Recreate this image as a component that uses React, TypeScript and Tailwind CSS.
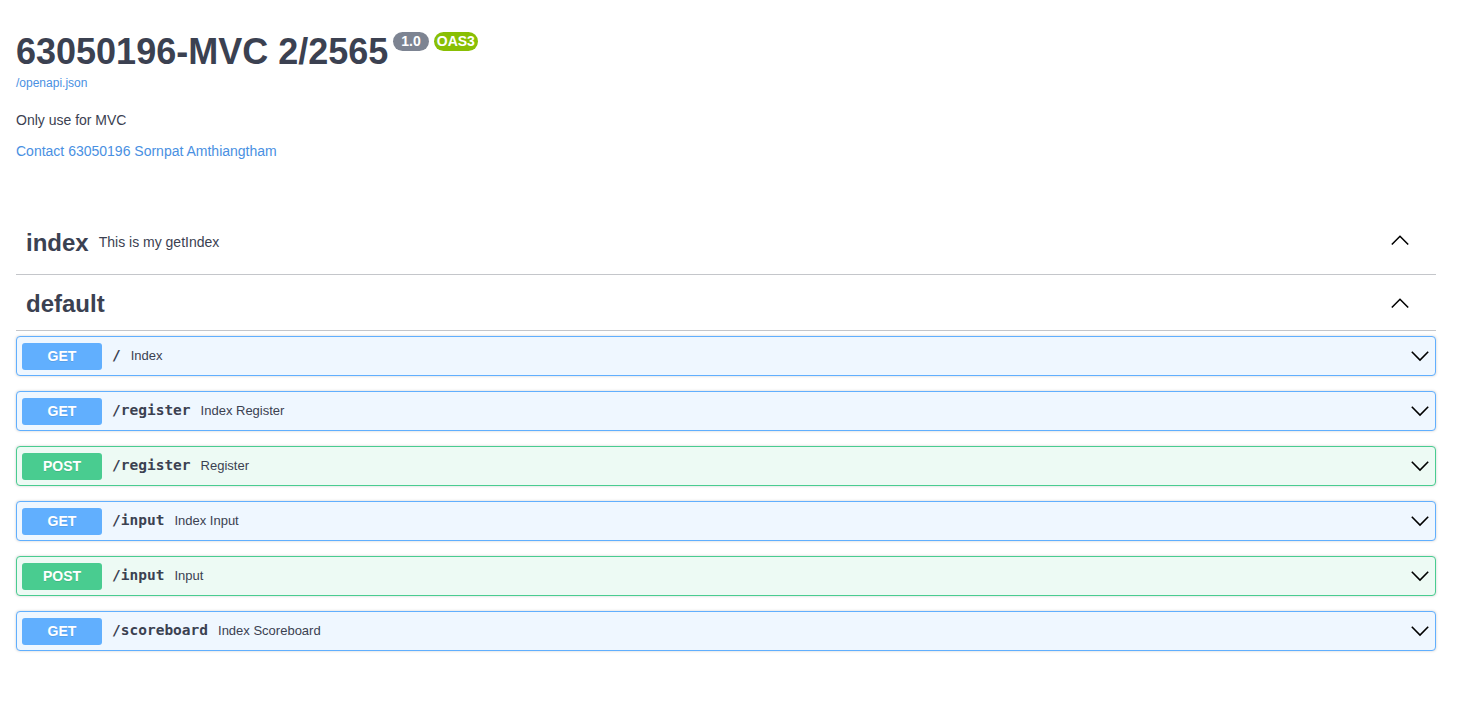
import React from 'react';

type Method = 'GET' | 'POST';

interface Operation {
    method: Method;
    path: string;
    summary: string;
}

const operations: Operation[] = [
    { method: 'GET', path: '/', summary: 'Index' },
    { method: 'GET', path: '/register', summary: 'Index Register' },
    { method: 'POST', path: '/register', summary: 'Register' },
    { method: 'GET', path: '/input', summary: 'Index Input' },
    { method: 'POST', path: '/input', summary: 'Input' },
    { method: 'GET', path: '/scoreboard', summary: 'Index Scoreboard' }
];

const methodStyles = {
    GET: {
        block: 'border-[#61affe] bg-[#eff7ff]',
        badge: 'bg-[#61affe]'
    },
    POST: {
        block: 'border-[#49cc90] bg-[#edfaf4]',
        badge: 'bg-[#49cc90]'
    }
};

const Chevron: React.FC<{ up?: boolean }> = ({ up }) => (
    <svg width="20" height="20" viewBox="0 0 20 20" className="shrink-0">
        {up ? (
            <path d="M1.8 14.5 L10 6.3 L18.2 14.5" fill="none" stroke="#000" strokeWidth="1.6" />
        ) : (
            <path d="M1.8 5.8 L10 14 L18.2 5.8" fill="none" stroke="#000" strokeWidth="1.6" />
        )}
    </svg>
);

const OperationRow: React.FC<Operation> = ({ method, path, summary }) => {
    const s = methodStyles[method];
    return (
        <div
            className={`mb-[15px] h-[40px] rounded-[4px] border shadow-[0_0_3px_rgba(0,0,0,0.19)] flex items-center p-[5px] ${s.block}`}
        >
            <span
                className={`w-[80px] h-[27px] rounded-[3px] flex items-center justify-center text-white text-[14px] font-bold [text-shadow:0_1px_0_rgba(0,0,0,0.1)] ${s.badge}`}
            >
                {method}
            </span>
            <span className="px-[10px] font-['DejaVu_Sans_Mono',monospace] font-bold text-[14.5px] text-[#3b4151]">
                {path}
            </span>
            <span className="text-[13px] text-[#3b4151]">{summary}</span>
            <span className="ml-auto">
                <Chevron />
            </span>
        </div>
    );
};

const App: React.FC = () => {
    return (
        <div className="min-h-screen bg-white font-['Liberation_Sans',Arial,sans-serif] text-[#3b4151]">
            <div className="ml-4 w-[1420px] pt-[32px]">
                <h2 className="flex items-start text-[36px] leading-[40px] font-bold text-[#3b4151]">
                    63050196-MVC 2/2565
                    <span className="ml-[5px] mt-0 rounded-full bg-[#7d8492] px-[8px] py-[2px] text-[14px] leading-[15px] font-bold text-white">
                        1.0
                    </span>
                    <span className="ml-[5px] mt-0 rounded-full bg-[#89bf04] px-[3px] py-[2px] text-[14px] leading-[15px] font-bold text-white">
                        OAS3
                    </span>
                </h2>
                <a className="mt-[4px] block text-[12px] leading-[15px] text-[#4990e2]">/openapi.json</a>
                <p className="mt-[21px] text-[14px] leading-[16px]">Only use for MVC</p>
                <a className="mt-[15px] block text-[14px] leading-[16px] text-[#4990e2]">
                    Contact 63050196 Sornpat Amthiangtham
                </a>

                <div className="mt-[60px] mb-[5px] h-[56px] border-b border-[rgba(59,65,81,0.3)] flex items-start pt-[10px] pl-[10px] pr-[20px]">
                    <span className="text-[24px] leading-[28px] font-bold">index</span>
                    <span className="mt-[5px] px-[10px] text-[14px] leading-[16px]">This is my getIndex</span>
                    <span className="ml-auto mt-[1px] mr-[6px]">
                        <Chevron up />
                    </span>
                </div>

                <div className="mb-[5px] h-[51px] border-b border-[rgba(59,65,81,0.3)] flex items-start pt-[10px] pl-[10px] pr-[20px]">
                    <span className="text-[24px] leading-[28px] font-bold">default</span>
                    <span className="ml-auto mt-[3px] mr-[6px]">
                        <Chevron up />
                    </span>
                </div>

                <div>
                    {operations.map(op => (
                        <OperationRow key={op.method + op.path} {...op} />
                    ))}
                </div>
            </div>
        </div>
    );
};

export default App;
